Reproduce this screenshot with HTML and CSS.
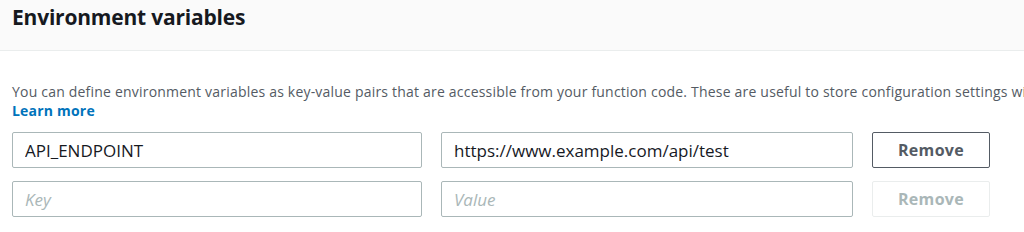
FILE: index.html
```html
<!DOCTYPE html>
<html>
<head>
  <title>Environment variables</title>
  <link rel="stylesheet" href="styles.css">
</head>
<body>
  <div class="panel-header">
    <h2>Environment variables</h2>
  </div>
  <div class="panel-body">
    <p class="desc">You can define environment variables as key-value pairs that are accessible from your function code. These are useful to store configuration settings without the need to change function code.<br><a href="#">Learn more</a></p>
    <div class="env-row">
      <input class="field" type="text" value="API_ENDPOINT" placeholder="Key">
      <input class="field" type="text" value="https://www.example.com/api/test" placeholder="Value">
      <button class="btn">Remove</button>
    </div>
    <div class="env-row">
      <input class="field" type="text" placeholder="Key">
      <input class="field" type="text" placeholder="Value">
      <button class="btn" disabled>Remove</button>
    </div>
  </div>
</body>
</html>
```
FILE: styles.css
```css
body {
  margin: 0;
  background: #fff;
  font-family: "Open Sans", "Liberation Sans", sans-serif;
  color: #16191f;
  overflow: hidden;
}

.panel-header {
  background: #fafafa;
  border-bottom: 1px solid #eaeded;
  height: 51px;
  padding: 0 12px;
  box-sizing: border-box;
}
.panel-header h2 {
  margin: 0;
  padding-top: 3px;
  font-size: 21px;
  line-height: 28px;
  font-weight: 700;
  letter-spacing: -0.2px;
  color: #16191f;
}

.panel-body {
  padding: 31px 12px 0;
}
.desc {
  margin: 0 0 12px;
  font-size: 14px;
  line-height: 19px;
  letter-spacing: 0.2px;
  color: #545b64;
  white-space: nowrap;
}
.desc a {
  color: #0073bb;
  font-weight: 700;
  text-decoration: none;
}

.env-row {
  display: flex;
  align-items: center;
  margin-bottom: 13px;
}
.field {
  width: 410px;
  height: 36px;
  box-sizing: border-box;
  margin-right: 19px;
  padding: 0 12px;
  border: 1px solid #aab7b8;
  border-radius: 2px;
  font-family: inherit;
  font-size: 17px;
  color: #16191f;
  outline: none;
}
.field::placeholder {
  color: #aab7b8;
  font-style: italic;
}
.field + .field {
  width: 412px;
  margin-right: 19px;
}
.btn {
  width: 118px;
  height: 36px;
  box-sizing: border-box;
  background: #fff;
  border: 1px solid #545b64;
  border-radius: 2px;
  color: #545b64;
  font-family: inherit;
  font-size: 16px;
  font-weight: 700;
  letter-spacing: 0.3px;
  cursor: pointer;
}
.btn:disabled {
  border-color: #eaeded;
  color: #aab7b8;
  cursor: default;
}
```
